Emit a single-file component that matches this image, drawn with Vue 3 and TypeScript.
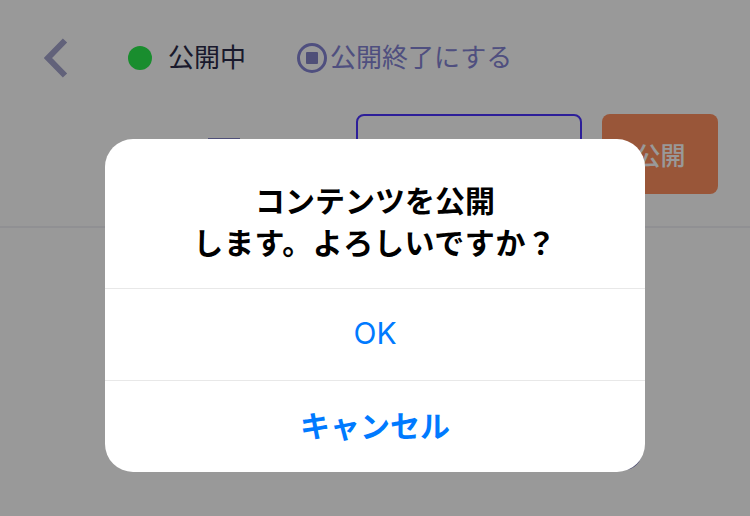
<script setup lang="ts">
const title: string[] = ['コンテンツを公開', 'します。よろしいですか？']
</script>

<template>
  <div class="page">
    <header class="status-row">
      <svg class="back" width="24" height="40" viewBox="0 0 24 40" aria-hidden="true">
        <path d="M21 2.5 L4 20 L21 37.5" fill="none" stroke="#a3a3cc" stroke-width="6" />
      </svg>
      <span class="dot"></span>
      <span class="state">公開中</span>
      <svg class="stop" width="30" height="30" viewBox="0 0 30 30" aria-hidden="true">
        <circle cx="15" cy="15" r="13.5" fill="none" stroke="#8484d4" stroke-width="3" />
        <rect x="9" y="9" width="12" height="12" rx="1" fill="#8484c8" />
      </svg>
      <span class="end-link">公開終了にする</span>
    </header>
    <div class="action-row">
      <span class="square"></span>
      <span class="input"></span>
      <span class="publish">公開</span>
    </div>
    <div class="body">
      <span class="fab"></span>
    </div>

    <div class="overlay">
      <div class="dialog">
        <div class="dialog-title">
          <div v-for="(line, i) in title" :key="line" :class="{ wide: i === 1 }">{{ line }}</div>
        </div>
        <button class="dialog-btn ok">OK</button>
        <button class="dialog-btn cancel">キャンセル</button>
      </div>
    </div>
  </div>
</template>

<style>
html, body { margin: 0; padding: 0; background: #fff; }
</style>

<style scoped>
.page {
  position: relative;
  width: 750px;
  height: 516px;
  overflow: hidden;
  background: #fff;
  font-family: "Noto Sans CJK JP", "Noto Sans", sans-serif;
}
.status-row {
  display: flex;
  align-items: center;
  height: 116px;
  padding-left: 44px;
  box-sizing: border-box;
}
.back { margin-right: 60px; }
.dot {
  width: 24px;
  height: 24px;
  border-radius: 50%;
  background: #2beb4d;
  margin-right: 16px;
}
.state {
  font-size: 26px;
  color: #2b2b4a;
  margin-right: 51px;
  width: 78px;
  padding-bottom: 5px;
}
.stop { margin-right: 3px; }
.end-link {
  font-size: 26px;
  color: #8484d4;
  padding-bottom: 5px;
}
.action-row {
  display: flex;
  align-items: flex-start;
  height: 114px;
  margin-top: -2px;
  padding-left: 208px;
  box-sizing: border-box;
  border-bottom: 2px solid #f0f0f6;
}
.square {
  width: 32px;
  height: 32px;
  margin-top: 24px;
  background: #8484c8;
  margin-right: 116px;
}
.input {
  width: 226px;
  height: 80px;
  box-sizing: border-box;
  border: 2px solid #4c34ff;
  border-radius: 8px;
  margin-right: 20px;
}
.publish {
  width: 116px;
  height: 80px;
  border-radius: 8px;
  background: #ff8f5f;
  color: #fff;
  font-size: 25px;
  font-weight: 500;
  display: flex;
  align-items: center;
  justify-content: center;
  padding-left: 1px;
  box-sizing: border-box;
}
.body {
  display: flex;
  justify-content: flex-end;
  padding: 206px 108px 0 0;
}
.fab {
  width: 36px;
  height: 36px;
  border-radius: 50%;
  background: #7b7bbb;
}
.overlay {
  position: absolute;
  inset: 0;
  display: flex;
  justify-content: center;
  align-items: flex-start;
  padding-top: 139px;
  box-sizing: border-box;
  background: rgba(0, 0, 0, 0.4);
}
.dialog {
  width: 540px;
  height: 333px;
  background: #fff;
  border-radius: 28px;
  display: flex;
  flex-direction: column;
  overflow: hidden;
}
.dialog-title {
  height: 148.5px;
  box-sizing: border-box;
  padding-top: 39px;
  text-align: center;
  font-size: 30px;
  line-height: 42px;
  font-weight: 700;
  color: #000;
}
.wide { letter-spacing: 0.6px; }
.dialog-btn {
  padding: 0;
  border: 0;
  border-top: 1.5px solid #e8e8e8;
  background: none;
  font-size: 30px;
  color: #007aff;
}
.ok {
  height: 92px;
  padding-bottom: 3px;
  font-family: Inter, "Noto Sans CJK JP", sans-serif;
}
.cancel {
  height: 92.5px;
  padding-bottom: 5.5px;
  font-family: inherit;
  font-weight: 700;
}
</style>
